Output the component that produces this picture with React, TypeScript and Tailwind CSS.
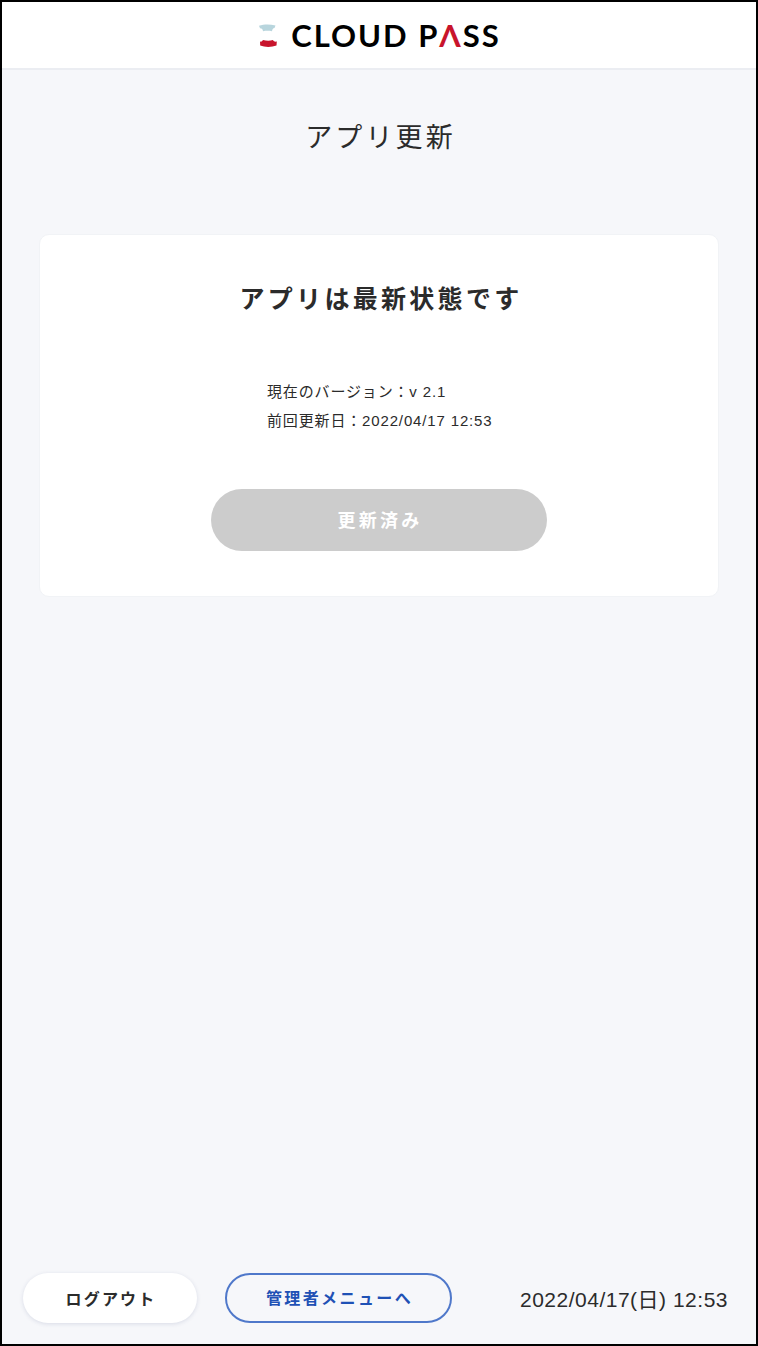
const JP = "font-['Liberation_Sans','Noto_Sans_CJK_JP',sans-serif]";

function Logo() {
  return (
    <div className="ml-[2px] flex items-center gap-[14px]">
      <svg width="18" height="24" viewBox="0 0 18 24" className="mt-[1px]">
        <path d="M0 1.8 C5 0 11 0 16.5 1.5 L15.5 4 C14 4.2 13.2 5.5 13 7.2 C10 6.6 7 6.6 4 7.2 C3.8 5.5 3 4.2 1 4.2 Z" fill="#b8d5dd" />
        <path d="M1 17.5 C2.5 18 3.5 17 4 16 C7.5 17 11 17 14 16 C14.5 17.2 16 18 17.8 17.5 L17.5 21.5 C12.5 23.4 6 23.4 1.2 21.5 Z" fill="#c8142c" />
      </svg>
      <div className="font-['Lato',sans-serif] text-[31px] font-bold leading-none tracking-[2px] text-black">
        CLOUD P<span className="text-[#c8142c]">Λ</span>SS
      </div>
    </div>
  );
}

export default function App() {
  return (
    <div className={`flex h-[1346px] w-[758px] flex-col border-2 border-black bg-[#f6f7fa] text-[#2b2b2b] ${JP}`}>
      <header className="flex h-[68px] shrink-0 items-center justify-center border-b-2 border-[#ebedf2] bg-white">
        <Logo />
      </header>

      <main className="flex flex-1 flex-col px-[37px]">
        <h1 className="mt-[48px] pl-[3px] text-center text-[27px] leading-[40px] tracking-[3.1px]">アプリ更新</h1>

        <section className="mt-[76px] flex h-[363px] flex-col items-center rounded-[10px] border border-[#f1f3f6] bg-white">
          <h2 className="mt-[44px] pl-[4px] text-center text-[25px] font-bold leading-[40px] tracking-[3.3px]">アプリは最新状態です</h2>
          <div className="mt-[59px] w-full pl-[227px] text-[15px] leading-[28.5px] tracking-[0.85px]">
            <p>現在のバージョン：v 2.1</p>
            <p>前回更新日：2022/04/17 12:53</p>
          </div>
          <button className="mt-[54px] h-[62px] w-[336px] rounded-full bg-[#cccccc] pl-[2px] pt-[2px] text-[18px] font-bold tracking-[3.2px] text-white">
            更新済み
          </button>
        </section>
      </main>

      <footer className="flex shrink-0 items-center pb-[21px] pl-[21px] pr-[28px]">
        <button className="h-[50px] w-[174px] rounded-full bg-white pl-[2px] pt-[3px] text-[16px] font-bold tracking-[2.2px] shadow-[0_1px_4px_rgba(40,60,110,0.14)]">
          ログアウト
        </button>
        <button className="ml-[28px] h-[50px] w-[227px] rounded-full border-2 border-[#4f78ca] pl-[2px] pt-[2px] text-[16px] font-bold tracking-[2.4px] text-[#1f51b5]">
          管理者メニューへ
        </button>
        <div className="ml-auto pt-[2px] text-[21px] leading-none tracking-[0.5px]">2022/04/17(日) 12:53</div>
      </footer>
    </div>
  );
}
